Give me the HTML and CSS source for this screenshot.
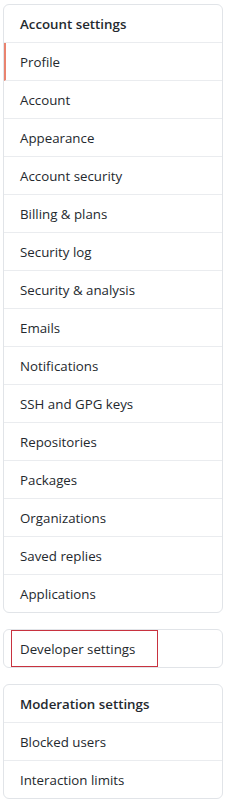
FILE: index.html
```html
<!DOCTYPE html>
<html lang="en">
<head>
    <meta charset="UTF-8">
    <meta name="viewport" content="width=device-width, initial-scale=1.0">
    <title>Settings</title>
    <link rel="stylesheet" href="styles.css">
</head>
<body>
    <nav class="menu">
        <h3 class="menu-heading">Account settings</h3>
        <a href="#" class="menu-item selected">Profile</a>
        <a href="#" class="menu-item">Account</a>
        <a href="#" class="menu-item">Appearance</a>
        <a href="#" class="menu-item">Account security</a>
        <a href="#" class="menu-item">Billing &amp; plans</a>
        <a href="#" class="menu-item">Security log</a>
        <a href="#" class="menu-item">Security &amp; analysis</a>
        <a href="#" class="menu-item">Emails</a>
        <a href="#" class="menu-item">Notifications</a>
        <a href="#" class="menu-item">SSH and GPG keys</a>
        <a href="#" class="menu-item">Repositories</a>
        <a href="#" class="menu-item">Packages</a>
        <a href="#" class="menu-item">Organizations</a>
        <a href="#" class="menu-item">Saved replies</a>
        <a href="#" class="menu-item">Applications</a>
    </nav>

    <nav class="menu">
        <a href="#" class="menu-item highlighted">Developer settings</a>
    </nav>

    <nav class="menu">
        <h3 class="menu-heading">Moderation settings</h3>
        <a href="#" class="menu-item">Blocked users</a>
        <a href="#" class="menu-item">Interaction limits</a>
    </nav>
</body>
</html>
```

FILE: styles.css
```css
* {
    margin: 0;
    padding: 0;
    box-sizing: border-box;
}

body {
    padding: 4px 2px 0 3px;
    background: #fff;
    font-family: 'Open Sans', 'Noto Sans', sans-serif;
    font-size: 13.3px;
    color: #24292e;
}

.menu {
    border: 1px solid #e1e4e8;
    border-radius: 6px;
    background: #fff;
    margin-bottom: 16px;
    overflow: hidden;
}

.menu-heading,
.menu-item {
    display: block;
    height: 38px;
    padding-top: 1px;
    line-height: 36px;
    padding-left: 16px;
    border-bottom: 1px solid #eaecef;
}

.menu > :last-child {
    border-bottom: none;
    height: 37px;
}

.menu-heading {
    font-size: 13.3px;
    font-weight: 600;
}

.menu-item {
    color: #24292e;
    text-decoration: none;
}

.menu-item.selected {
    border-left: 2px solid #e9836f;
    padding-left: 14px;
}

.menu-item.highlighted {
    display: inline-block;
    margin: 0 0 0 7px;
    padding: 0 0 0 8px;
    width: 147px;
    border: 1px solid #c8323f;
    height: 37px;
    line-height: 36px;
}
```
